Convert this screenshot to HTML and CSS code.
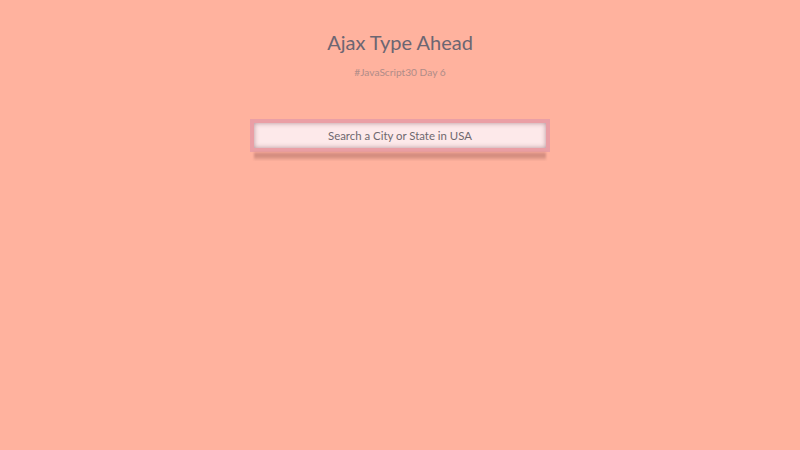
FILE: index.html
```html
<!DOCTYPE html>
<html lang="en">
<head>
<meta charset="UTF-8">
<meta name="viewport" content="width=device-width, initial-scale=1.0">
<title>Ajax Type Ahead</title>
<link rel="stylesheet" href="styles.css">
</head>
<body>

<div class="header">
  <h1>Ajax Type Ahead</h1>
  <p class="sub">#JavaScript30 Day 6</p>
</div>

<form class="search-form">
  <div class="search-box">
    <input type="text" class="search" placeholder="Search a City or State in USA">
  </div>
  <div class="search-shadow"></div>
  <ul class="suggestions"></ul>
</form>

</body>
</html>
```

FILE: styles.css
```css
html {
  box-sizing: border-box;
  background: #ffb29e;
}
*, *:before, *:after {
  box-sizing: inherit;
}
body {
  margin: 0;
  font-family: 'Lato', 'Noto Sans', sans-serif;
  color: #6e6570;
  text-align: center;
}
.header {
  padding-top: 28px;
}
h1 {
  margin: 0;
  font-size: 20px;
  font-weight: 400;
  line-height: 28px;
  color: #6c6672;
}
.sub {
  margin: 10px 0 0;
  font-size: 10.2px;
  color: #b08c88;
}
.search-form {
  width: 300px;
  margin: 41px auto 0;
}
.search-box {
  border: 4px solid #ea9fa5;
}
/* soft shadow strip under the search field */
.search-shadow {
  height: 9px;
  margin: 0 4px;
  background: linear-gradient(to bottom, #e79a8e 0%, #cf897c 40%, #e9a08f 75%, #ffb29e 100%);
  filter: blur(1px);
}
input.search {
  display: block;
  width: 100%;
  height: 25px;
  margin: 0;
  padding: 0;
  border: 0;
  background: #fde9ea;
  font-family: inherit;
  font-size: 11.4px;
  color: #6e6570;
  text-align: center;
  outline: 0;
  box-shadow: inset 0 0 5px rgba(90, 40, 50, 0.45);
}
input.search::placeholder {
  color: #6f686e;
  opacity: 1;
}
.suggestions {
  margin: 0;
  padding: 0;
  list-style: none;
}
```
